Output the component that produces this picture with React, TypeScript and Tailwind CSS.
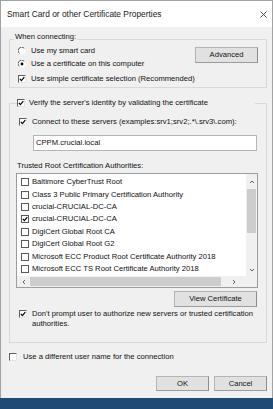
import React from "react";

const certs = [
  { name: "Baltimore CyberTrust Root", checked: false },
  { name: "Class 3 Public Primary Certification Authority", checked: false },
  { name: "crucial-CRUCIAL-DC-CA", checked: false },
  { name: "crucial-CRUCIAL-DC-CA", checked: true },
  { name: "DigiCert Global Root CA", checked: false },
  { name: "DigiCert Global Root G2", checked: false },
  { name: "Microsoft ECC Product Root Certificate Authority 2018", checked: false },
  { name: "Microsoft ECC TS Root Certificate Authority 2018", checked: false },
];

function Check({ checked, flat }: { checked?: boolean; flat?: boolean }) {
  return (
    <span
      className={`relative inline-block w-[8px] h-[8px] shrink-0 bg-white border ${
        flat
          ? "border-[#5a5a5a]"
          : "border-t-[#5f5f5f] border-l-[#5f5f5f] border-r-[#e4e4e4] border-b-[#e4e4e4]"
      }`}
    >
      {checked && (
        <svg viewBox="0 0 6 6" className="absolute inset-0 w-full h-full">
          <path d="M0.8 2.9 L2.4 4.6 L5.3 1.1" stroke="#000" strokeWidth="1.2" fill="none" />
        </svg>
      )}
    </span>
  );
}

function Radio({ on }: { on?: boolean }) {
  return (
    <svg width="8" height="8" viewBox="0 0 8 8" className="shrink-0">
      <circle cx="4" cy="4" r="3.5" fill="#fff" />
      <path d="M1.2 6.3 A3.4 3.4 0 0 1 6.3 1.2" stroke="#5f5f5f" strokeWidth="1" fill="none" />
      {on && <circle cx="4" cy="4" r="1.4" fill="#000" />}
    </svg>
  );
}

function Button({ label, className }: { label: string; className: string }) {
  return (
    <button
      className={`flex items-center justify-center bg-[#e1e1e1] border border-[#b4b4b4] border-r-[#8c8c8c] border-b-[#9c9c9c] text-[7.6px] leading-none text-[#111] ${className}`}
    >
      {label}
    </button>
  );
}

function Arrow({ dir }: { dir: "up" | "down" | "left" | "right" }) {
  const d = {
    up: "M1 4 L3 2 L5 4",
    down: "M1 2 L3 4 L5 2",
    left: "M4 1 L2 3 L4 5",
    right: "M2 1 L4 3 L2 5",
  }[dir];
  return (
    <svg width="6" height="6" viewBox="0 0 6 6">
      <path d={d} stroke="#606060" strokeWidth="1" fill="none" />
    </svg>
  );
}

export default function App() {
  return (
    <div className="w-[273px] h-[409px] overflow-hidden bg-[#1f4a76] font-['Liberation_Sans',Arial,sans-serif] text-[#111]">
      <div className="h-[398px] bg-[#f0f0f0] border border-b-0 border-[#a3a3a3] flex flex-col">
        {/* title bar */}
        <div className="h-[26px] shrink-0 bg-white flex items-center justify-between pl-[6px] pr-[5px]">
          <span className="text-[8.4px] text-[#222]">Smart Card or other Certificate Properties</span>
          <svg width="7" height="7" viewBox="0 0 7 7">
            <path d="M0.5 0.5 L6.5 6.5 M6.5 0.5 L0.5 6.5" stroke="#333" strokeWidth="0.9" />
          </svg>
        </div>

        <div className="pl-[8px] pr-[5px] text-[7.65px] leading-[10px]">
          {/* When connecting */}
          <fieldset className="mt-[5px] w-[258px] border border-[#d9d9d9] pb-[3px]">
            <legend className="ml-[4px] px-[1px] pb-[4px] leading-[10px]">When connecting:</legend>
            <div className="flex">
              <div className="flex flex-col pl-[8px]">
                <div className="h-[10px] flex items-center gap-[5px]">
                  <Radio />
                  <span>Use my smart card</span>
                </div>
                <div className="h-[10px] mt-[3px] flex items-center gap-[5px]">
                  <Radio on />
                  <span>Use a certificate on this computer</span>
                </div>
                <div className="h-[10px] mt-[5px] flex items-center gap-[5px]">
                  <Check checked />
                  <span>Use simple certificate selection (Recommended)</span>
                </div>
              </div>
              <Button label="Advanced" className="ml-auto mr-[8px] mt-[1px] w-[63px] h-[16px]" />
            </div>
          </fieldset>

          {/* Verify server */}
          <fieldset className="mt-[10px] w-[258px] border border-[#d9d9d9] flex flex-col">
            <legend className="ml-[7px] w-[238px] h-[10px] flex items-center gap-[4px]">
              <Check checked />
              <span>Verify the server's identity by validating the certificate</span>
            </legend>

            <div className="mt-[9px] ml-[9px] h-[10px] flex items-center gap-[5px]">
              <Check checked />
              <span>Connect to these servers (examples:srv1;srv2;.*\.srv3\.com):</span>
            </div>

            <div className="mt-[8px] ml-[23px] w-[224px] h-[16px] bg-white border border-[#b3b5ba] flex items-center pl-[2px]">
              CPPM.crucial.local
            </div>

            <div className="mt-[10px] ml-[7px] h-[10px] flex items-center">Trusted Root Certification Authorities:</div>

            <div className="mt-[2px] ml-[6px] w-[242px] h-[115px] bg-white border border-[#9a9da3] flex flex-col">
              <div className="flex flex-1">
                <div className="flex-1 pt-[2px] pl-[4px] overflow-hidden">
                  {certs.map((c, i) => (
                    <div key={i} className="h-[12.4px] flex items-center gap-[3px] whitespace-nowrap">
                      <Check flat checked={c.checked} />
                      <span>{c.name}</span>
                    </div>
                  ))}
                </div>
                <div className="w-[11px] bg-[#f0f0f0] flex flex-col items-center">
                  <div className="h-[15px] flex items-center justify-center">
                    <Arrow dir="up" />
                  </div>
                  <div className="h-[44px] w-[9px] bg-[#cdcdcd]" />
                  <div className="flex-1" />
                  <div className="h-[13px] flex items-center justify-center">
                    <Arrow dir="down" />
                  </div>
                </div>
              </div>
              <div className="h-[11px] flex shrink-0">
                <div className="flex-1 bg-[#f0f0f0] flex items-center">
                  <div className="w-[13px] flex justify-center">
                    <Arrow dir="left" />
                  </div>
                  <div className="w-[191px] h-[9px] bg-[#cdcdcd]" />
                  <div className="flex-1 flex justify-center">
                    <Arrow dir="right" />
                  </div>
                </div>
                <div className="w-[11px] bg-[#f0f0f0]" />
              </div>
            </div>

            <Button label="View Certificate" className="self-end mt-[3px] mr-[9px] w-[83px] h-[16px]" />

            <div className="mt-[2px] ml-[9px] mb-[13px] flex gap-[5px]">
              <span className="h-[10px] flex items-center">
                <Check checked />
              </span>
              <span className="whitespace-nowrap">
                Don't prompt user to authorize new servers or trusted certification
                <br />
                authorities.
              </span>
            </div>
          </fieldset>

          <div className="mt-[9px] h-[10px] flex items-center gap-[6px]">
            <Check />
            <span>Use a different user name for the connection</span>
          </div>

          <div className="mt-[14px] w-[258px] flex justify-end gap-[5px]">
            <Button label="OK" className="w-[53px] h-[15px]" />
            <Button label="Cancel" className="w-[53px] h-[15px]" />
          </div>
        </div>
      </div>
    </div>
  );
}
